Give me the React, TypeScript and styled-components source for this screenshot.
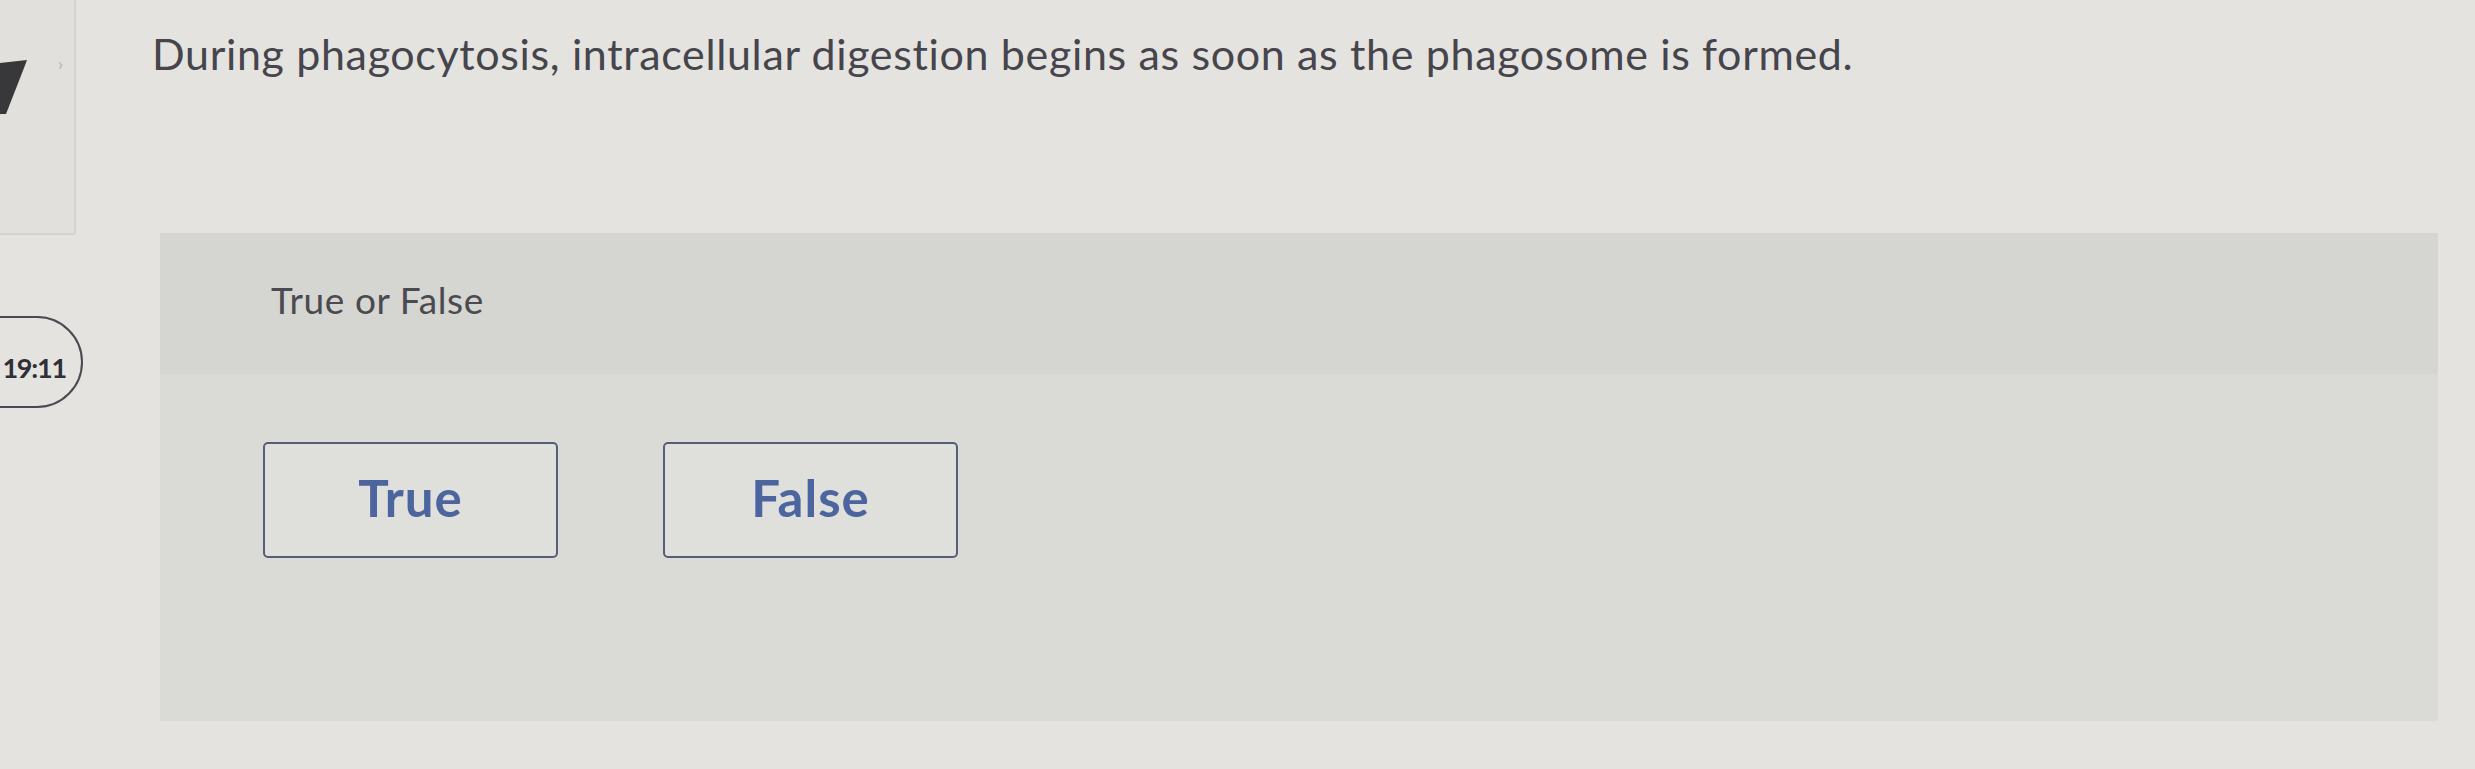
import React, { useState } from 'react';
import styled, { createGlobalStyle, css } from 'styled-components';

const GlobalStyle = createGlobalStyle`
  html, body {
    margin: 0;
    padding: 0;
    background: #e4e3df;
  }
  body {
    font-family: 'Lato', 'Open Sans', sans-serif;
    color: #48474e;
  }
`;

const Page = styled.div`
  display: flex;
  width: 2475px;
  height: 769px;
  overflow: hidden;
  background: #e4e3df;
`;

const Rail = styled.aside`
  display: flex;
  flex-direction: column;
  width: 76px;
  flex-shrink: 0;
`;

const SideCard = styled.div`
  position: relative;
  height: 235px;
  box-sizing: border-box;
  border-right: 2px solid #d3d2ce;
  border-bottom: 2px solid #d3d2ce;
  border-bottom-right-radius: 3px;
  background: #e1e0dc;
`;

const Flag = styled.svg`
  position: absolute;
  left: 0;
  top: 58px;
`;

const Chevron = styled.span`
  position: absolute;
  left: 58px;
  top: 52px;
  font-size: 18px;
  color: #b3b2ae;
`;

const Timer = styled.div`
  display: flex;
  align-items: center;
  justify-content: flex-end;
  box-sizing: border-box;
  width: 128px;
  height: 92px;
  margin: 81px 0 0 -45px;
  padding: 10px 15px 0 0;
  border: 2px solid #4a4a50;
  border-radius: 0 46px 46px 0;
  font-size: 27px;
  font-weight: 700;
  color: #2f2f35;
  letter-spacing: -1.2px;
`;

const Main = styled.main`
  display: flex;
  flex-direction: column;
  padding-left: 76px;
  flex: 1;
`;

const Prompt = styled.h1`
  margin: 0;
  padding-top: 28px;
  font-size: 43px;
  line-height: 1.2;
  font-weight: 400;
  letter-spacing: 0.65px;
  color: #46454c;
  white-space: nowrap;
`;

const Panel = styled.section`
  display: flex;
  flex-direction: column;
  margin: 153px 0 0 8px;
  width: 2278px;
  height: 488px;
  background: #dadad6;
`;

const Instructions = styled.div`
  box-sizing: border-box;
  height: 141px;
  padding: 45px 0 0 111px;
  background: #d5d5d1;
  font-size: 37px;
  line-height: 1.2;
  letter-spacing: 0.6px;
  color: #4a4a50;
`;

const Choices = styled.div`
  display: flex;
  gap: 105px;
  padding: 68px 0 0 103px;
`;

const Choice = styled.button<{ selected: boolean }>`
  display: flex;
  align-items: center;
  justify-content: center;
  box-sizing: border-box;
  width: 295px;
  height: 116px;
  padding: 0 0 4px;
  border: 2px solid #575d78;
  border-radius: 5px;
  background: #dfdfdb;
  font-family: 'Lato', 'Open Sans', sans-serif;
  font-size: 51px;
  font-weight: 700;
  letter-spacing: 1px;
  color: #4d659f;
  cursor: pointer;

  ${({ selected }) =>
    selected &&
    css`
      background: #d4dbea;
    `};
`;

const answers = ['True', 'False'];

const App = () => {
  const [picked, setPicked] = useState<string | null>(null);

  return (
    <>
      <GlobalStyle />
      <Page>
        <Rail>
          <SideCard>
            <Flag width="28" height="58" viewBox="0 0 28 58">
              <polygon points="0,5 27,2 24,10 6,56 0,56" fill="#38383b" />
            </Flag>
            <Chevron>›</Chevron>
          </SideCard>
          <Timer>19:11</Timer>
        </Rail>
        <Main>
          <Prompt>
            During phagocytosis, intracellular digestion begins as soon as the phagosome is formed.
          </Prompt>
          <Panel>
            <Instructions>True or False</Instructions>
            <Choices>
              {answers.map((a) => (
                <Choice key={a} selected={picked === a} onClick={() => setPicked(a)}>
                  {a}
                </Choice>
              ))}
            </Choices>
          </Panel>
        </Main>
      </Page>
    </>
  );
};

export default App;
